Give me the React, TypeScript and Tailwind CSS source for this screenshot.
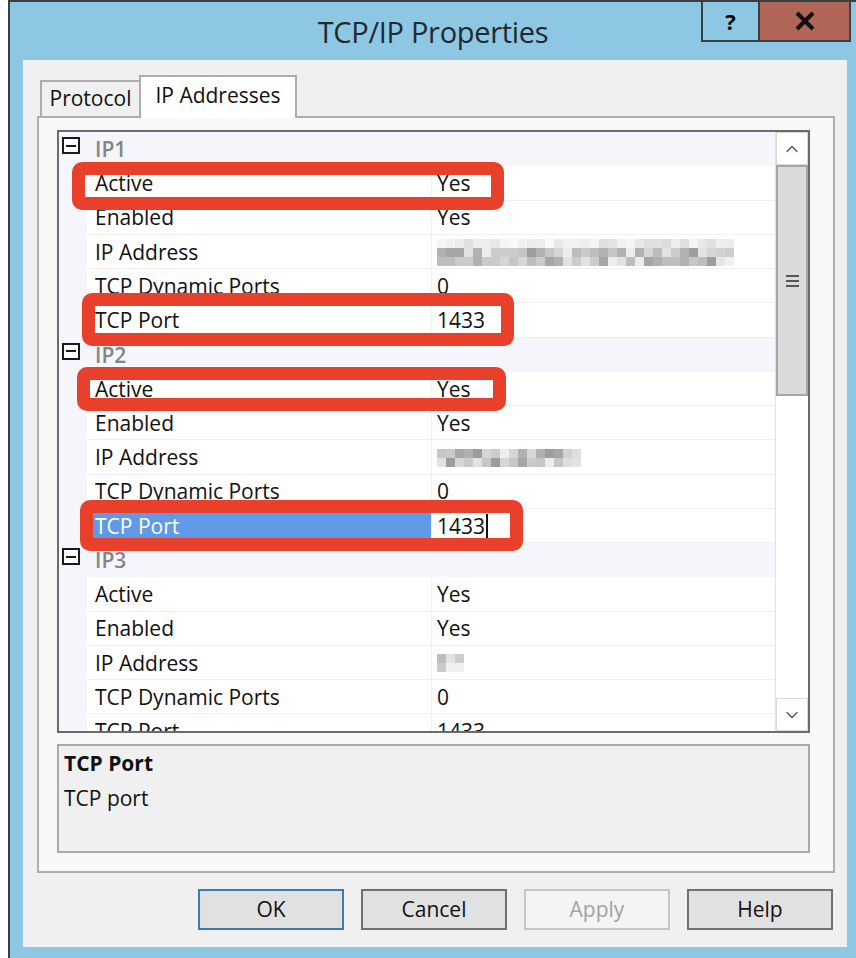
import { ChevronUp, ChevronDown } from 'lucide-react';

type Row =
  | { kind: 'cat'; label: string }
  | { kind: 'prop'; name: string; value?: string; blur?: { cols: number; rows: number }; selected?: boolean };

const rows: Row[] = [
  { kind: 'cat', label: 'IP1' },
  { kind: 'prop', name: 'Active', value: 'Yes' },
  { kind: 'prop', name: 'Enabled', value: 'Yes' },
  { kind: 'prop', name: 'IP Address', blur: { cols: 33, rows: 3 } },
  { kind: 'prop', name: 'TCP Dynamic Ports', value: '0' },
  { kind: 'prop', name: 'TCP Port', value: '1433' },
  { kind: 'cat', label: 'IP2' },
  { kind: 'prop', name: 'Active', value: 'Yes' },
  { kind: 'prop', name: 'Enabled', value: 'Yes' },
  { kind: 'prop', name: 'IP Address', blur: { cols: 16, rows: 2 } },
  { kind: 'prop', name: 'TCP Dynamic Ports', value: '0' },
  { kind: 'prop', name: 'TCP Port', value: '1433', selected: true },
  { kind: 'cat', label: 'IP3' },
  { kind: 'prop', name: 'Active', value: 'Yes' },
  { kind: 'prop', name: 'Enabled', value: 'Yes' },
  { kind: 'prop', name: 'IP Address', blur: { cols: 3, rows: 2 } },
  { kind: 'prop', name: 'TCP Dynamic Ports', value: '0' },
  { kind: 'prop', name: 'TCP Port', value: '1433' },
];

const grays = ['#a8a5a7', '#bdbdbd', '#c9cbcd', '#d6d6d6', '#b4b0b2', '#e2e2e2', '#9e9c9e', '#c3c7ca', '#cfc9cb', '#ededed'];

// pixelated (hidden) address
function Mosaic({ cols, rows: n }: { cols: number; rows: number }) {
  let seed = cols * 7 + 3;
  const next = () => {
    seed = (seed * 9301 + 49297) % 233280;
    return seed / 233280;
  };
  return (
    <div className="flex flex-col">
      {Array.from({ length: n }).map((_, r) => (
        <div key={r} className="flex">
          {Array.from({ length: cols }).map((_, c) => {
            const g = grays[Math.floor(next() * grays.length)];
            const light = n === 3 && r === 0;
            return (
              <div
                key={c}
                className="w-[9px] h-[9px]"
                style={{ background: g, opacity: light ? 0.35 : c > cols - 3 ? 0.5 : 1 }}
              />
            );
          })}
        </div>
      ))}
    </div>
  );
}

function MinusBox() {
  return (
    <div className="w-[18px] h-[17px] border-2 border-[#1a1a1a] bg-white flex items-center justify-center">
      <div className="w-[10px] h-[2px] bg-[#1a1a1a]" />
    </div>
  );
}

function GridRow({ row }: { row: Row }) {
  if (row.kind === 'cat') {
    return (
      <div className="flex h-[34.25px] shrink-0 bg-[#f4f6fb]">
        <div className="w-[28px] pl-[3px] pt-[5px]">
          <MinusBox />
        </div>
        <div className="pl-[8px] pt-[2px] flex items-center text-[21px] font-semibold text-[#858585]">{row.label}</div>
      </div>
    );
  }
  return (
    <div className="flex h-[34.25px] shrink-0">
      <div className="w-[28px] bg-[#f4f6fb]" />
      <div
        className={
          'w-[344px] pl-[8px] pt-[2px] flex items-center border-b border-[#eef0f5] text-[21px] ' +
          (row.selected ? 'bg-[#6199e9] text-white' : 'bg-white text-[#111]')
        }
      >
        {row.name}
      </div>
      <div className="w-[344px] pl-[5px] pt-[2px] flex items-center border-b border-l border-[#eef0f5] bg-white text-[21px] text-[#111]">
        {row.blur ? (
          <Mosaic cols={row.blur.cols} rows={row.blur.rows} />
        ) : (
          <span className="flex items-center">
            {row.value}
            {row.selected && <span className="w-[2px] h-[24px] bg-[#111] ml-[1px]" />}
          </span>
        )}
      </div>
    </div>
  );
}

function RedBox({ className }: { className: string }) {
  return <div className={'absolute border-[13px] border-[#e8402a] rounded-[10px] pointer-events-none ' + className} />;
}

export default function App() {
  return (
    <div className="relative w-[856px] h-[958px] bg-white overflow-hidden font-['Open_Sans',sans-serif]">
      <div className="ml-[8px] h-[958px] border-l-2 border-t-2 border-[#3b3f42] bg-[#8dc7e3] flex flex-col">
        {/* title bar */}
        <div className="relative h-[58px] shrink-0 flex items-center justify-center">
          <span className="text-[29px] text-[#1e2a30] tracking-[-0.3px] pt-[2px]">TCP/IP Properties</span>
          <div className="absolute top-[-2px] right-[5px] flex h-[42px]">
            <div className="w-[57px] border-2 border-r-0 border-[#3b3f42] flex items-center justify-center text-[22px] font-bold text-black">
              ?
            </div>
            <div className="w-[93px] border-2 border-[#3b3f42] bg-[#b06757] flex items-center justify-center">
              <svg width="22" height="20" viewBox="0 0 22 20">
                <path d="M3 2 L19 18 M19 2 L3 18" stroke="#111" strokeWidth="4" />
              </svg>
            </div>
          </div>
        </div>

        {/* client area */}
        <div className="ml-[13px] mr-[9px] h-[887px] bg-[#f0f0f0] flex flex-col pt-[15px]">
          {/* tabs */}
          <div className="relative z-10 flex items-end h-[43px] ml-[17px] -mb-[2px]">
            <div className="w-[99px] h-[36px] mb-[2px] border-2 border-r-0 border-b-0 border-[#adadad] bg-[#f0f0f0] flex items-center justify-center text-[21px] text-[#111]">
              Protocol
            </div>
            <div className="w-[158px] h-[43px] border-2 border-b-0 border-[#adadad] bg-white flex items-center justify-center text-[21px] text-[#111] pb-[3px]">
              IP Addresses
            </div>
          </div>

          {/* tab panel */}
          <div className="ml-[14px] w-[798px] h-[757px] shrink-0 border-2 border-[#adadad] bg-[#f8f8f8] flex flex-col pl-[18px] pt-[12px]">
            {/* property grid */}
            <div className="w-[753px] h-[603px] border-2 border-[#6b6b6b] flex overflow-hidden">
              <div className="w-[716px] flex flex-col overflow-hidden bg-white">
                {rows.map((r, i) => (
                  <GridRow key={i} row={r} />
                ))}
              </div>
              <div className="w-[33px] flex flex-col border-l border-[#e2e2e2] bg-white">
                <div className="h-[33px] border border-[#d9d9d9] flex items-center justify-center">
                  <ChevronUp size={20} strokeWidth={1.5} color="#555" />
                </div>
                <div className="h-[231px] border-2 border-[#a6a6a6] bg-[#dadada] flex flex-col items-center justify-center gap-[3px]">
                  <div className="w-[13px] h-[2px] bg-[#555]" />
                  <div className="w-[13px] h-[2px] bg-[#555]" />
                  <div className="w-[13px] h-[2px] bg-[#555]" />
                </div>
                <div className="flex-1" />
                <div className="h-[33px] border border-[#d9d9d9] flex items-center justify-center">
                  <ChevronDown size={20} strokeWidth={1.5} color="#555" />
                </div>
              </div>
            </div>

            {/* description */}
            <div className="mt-[11px] w-[753px] h-[109px] border-2 border-[#a9a9a9] bg-[#f0f0f0] pl-[5px] text-[21px] text-[#111] leading-[35px]">
              <div className="font-bold">TCP Port</div>
              <div>TCP port</div>
            </div>
          </div>

          {/* buttons */}
          <div className="mt-[16px] flex justify-end gap-[17px] pr-[14px]">
            <button className="w-[146px] h-[41px] border-2 border-[#3d7bb5] bg-[#e1e1e1] text-[21px] text-[#111]">OK</button>
            <button className="w-[146px] h-[41px] border-2 border-[#707070] bg-[#e1e1e1] text-[21px] text-[#111]">Cancel</button>
            <button className="w-[146px] h-[41px] border-2 border-[#c6c6c6] bg-[#f4f4f4] text-[21px] text-[#a3a3a3]">Apply</button>
            <button className="w-[146px] h-[41px] border-2 border-[#707070] bg-[#e1e1e1] text-[21px] text-[#111]">Help</button>
          </div>
        </div>
      </div>

      {/* annotation boxes */}
      <RedBox className="left-[72px] top-[162px] w-[432px] h-[48px]" />
      <RedBox className="left-[82px] top-[293px] w-[432px] h-[53px]" />
      <RedBox className="left-[77px] top-[367px] w-[429px] h-[44px]" />
      <RedBox className="left-[80px] top-[500px] w-[443px] h-[51px]" />
    </div>
  );
}
